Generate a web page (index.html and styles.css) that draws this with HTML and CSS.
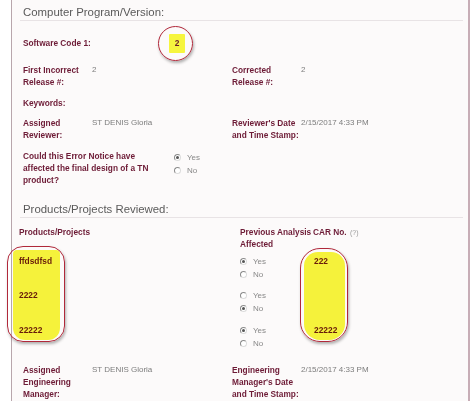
FILE: index.html
```html
<!DOCTYPE html>
<html>
<head>
<meta charset="utf-8">
<link rel="stylesheet" href="styles.css">
</head>
<body>
<div class="frame">
  <h2 class="sec-title">Computer Program/Version:</h2>
  <div class="fields">
    <div class="row row-code">
      <span class="label code-label">Software Code 1:</span>
      <span class="code-val">2</span>
    </div>
    <div class="row pair r2">
      <div class="field"><span class="label">First Incorrect Release #:</span><span class="value">2</span></div>
      <div class="field"><span class="label">Corrected Release #:</span><span class="value">2</span></div>
    </div>
    <div class="row r3">
      <div class="field"><span class="label">Keywords:</span><span class="value"></span></div>
    </div>
    <div class="row pair r4">
      <div class="field"><span class="label">Assigned Reviewer:</span><span class="value">ST DENIS Gloria</span></div>
      <div class="field"><span class="label">Reviewer's Date and Time Stamp:</span><span class="value">2/15/2017 4:33 PM</span></div>
    </div>
    <div class="row question r5">
      <span class="label q-label">Could this Error Notice have affected the final design of a TN product?</span>
      <div class="radios">
        <div class="radio"><span class="dot on"></span>Yes</div>
        <div class="radio"><span class="dot"></span>No</div>
      </div>
    </div>
  </div>

  <h2 class="sec-title sec2">Products/Projects Reviewed:</h2>
  <div class="table">
    <div class="thead">
      <span class="label">Products/Projects</span>
      <span class="label">Previous Analysis Affected</span>
      <span class="label">CAR No. <span class="help">(?)</span></span>
    </div>
    <div class="tbody">
      <div class="trow">
        <span class="prod">ffdsdfsd</span>
        <div class="radios"><div class="radio"><span class="dot on"></span>Yes</div><div class="radio"><span class="dot"></span>No</div></div>
        <span class="car">222</span>
      </div>
      <div class="trow">
        <span class="prod">2222</span>
        <div class="radios"><div class="radio"><span class="dot"></span>Yes</div><div class="radio"><span class="dot on"></span>No</div></div>
        <span class="car"></span>
      </div>
      <div class="trow">
        <span class="prod">22222</span>
        <div class="radios"><div class="radio"><span class="dot on"></span>Yes</div><div class="radio"><span class="dot"></span>No</div></div>
        <span class="car">22222</span>
      </div>
      <span class="hl hl-left"></span>
      <span class="ring ring-left"></span>
      <span class="hl hl-right"></span>
      <span class="ring ring-right"></span>
    </div>
  </div>

  <div class="fields">
    <div class="row pair r6">
      <div class="field"><span class="label">Assigned Engineering Manager:</span><span class="value">ST DENIS Gloria</span></div>
      <div class="field"><span class="label">Engineering Manager's Date and Time Stamp:</span><span class="value">2/15/2017 4:33 PM</span></div>
    </div>
  </div>
</div>
</body>
</html>
```

FILE: styles.css
```css
html, body {
  margin: 0;
  padding: 0;
  background: #ffffff;
  font-family: "Liberation Sans", Arial, Helvetica, sans-serif;
}

.frame {
  margin-left: 11px;
  width: 456px;
  min-height: 420px;
  background: #fcfafa;
  border-left: 1px solid #b8a6ac;
  border-right: 2px solid #c7adb6;
}

.sec-title {
  margin: 0 5px 0 8px;
  padding: 5px 0 1px 3px;
  font-size: 11.4px;
  line-height: 14px;
  font-weight: normal;
  color: #5a5a5a;
  border-bottom: 1px solid #e8e3e5;
}

.sec2 {
  margin-top: 11px;
}

.fields {
  padding-left: 11px;
}

.label {
  font-size: 8.3px;
  line-height: 12px;
  font-weight: bold;
  color: #6d1b36;
}

.value {
  font-size: 8px;
  line-height: 12px;
  color: #7c7c7c;
}

.row {
  display: flex;
}

.row-code {
  margin-top: 12px;
  height: 20px;
  align-items: center;
}

.code-label {
  width: 146px;
}

.code-val {
  position: relative;
  width: 16px;
  height: 19px;
  line-height: 19px;
  text-align: center;
  background: #f6f53e;
  border-radius: 1px;
  font-size: 8.4px;
  font-weight: bold;
  color: #6b1c2c;
}

.code-val::after {
  content: "";
  position: absolute;
  left: -11px;
  top: -8px;
  width: 33px;
  height: 33px;
  border: 1.6px solid #b0283a;
  border-radius: 50%;
  box-shadow: 1px 2px 3px rgba(0, 0, 0, 0.3);
}

.pair {
  display: grid;
  grid-template-columns: 209px 209px;
}

.field {
  display: grid;
  grid-template-columns: 69px 1fr;
  align-items: start;
}

.r2 { margin-top: 11px; }
.r3 { margin-top: 9px; }
.r4 { margin-top: 8px; }
.r5 { margin-top: 9px; }
.r6 { margin-top: 14.5px; }

.q-label {
  width: 140px;
  margin-right: 11px;
}

.radios {
  display: flex;
  flex-direction: column;
  margin-top: 0.5px;
}

.radio {
  display: flex;
  align-items: center;
  height: 13px;
  font-size: 8px;
  color: #888888;
}

.dot {
  position: relative;
  display: inline-block;
  box-sizing: border-box;
  width: 7px;
  height: 7px;
  margin-right: 6px;
  border-radius: 50%;
  border: 1px solid;
  border-color: #8a8a8a #dcdcdc #dcdcdc #8a8a8a;
  background: #ffffff;
}

.dot.on::after {
  content: "";
  position: absolute;
  left: 1px;
  top: 1px;
  width: 3px;
  height: 3px;
  border-radius: 50%;
  background: #555555;
}

.table {
  margin-left: 7px;
  margin-top: 8px;
}

.thead,
.trow {
  display: grid;
  grid-template-columns: 221px 73px 1fr;
  align-items: start;
}

.help {
  font-size: 7px;
  font-weight: normal;
  color: #9a9a9a;
  margin-left: 1px;
}

.tbody {
  position: relative;
  margin-top: 4.5px;
  display: flex;
  flex-direction: column;
  gap: 8.5px;
}

.prod,
.car {
  font-size: 8.4px;
  line-height: 13px;
  font-weight: bold;
  color: #6b1c24;
}

.car {
  padding-left: 1px;
}

.trow .radios {
  margin-top: 0;
}

.hl {
  position: absolute;
  background: #f8f73c;
  mix-blend-mode: multiply;
}

.hl-left {
  left: -6px;
  top: -4.5px;
  width: 47px;
  height: 90px;
  border-radius: 4px 4px 12px 12px;
}

.hl-right {
  left: 285px;
  top: -2.5px;
  width: 41px;
  height: 88px;
  border-radius: 14px 14px 16px 16px;
}

.ring {
  position: absolute;
  box-sizing: border-box;
  border: 1.6px solid #b0283a;
  box-shadow: 1px 2px 3px rgba(0, 0, 0, 0.3);
}

.ring-left {
  left: -12px;
  top: -8.5px;
  width: 58px;
  height: 96px;
  border-radius: 16px;
}

.ring-right {
  left: 281px;
  top: -6.5px;
  width: 48px;
  height: 94px;
  border-radius: 20px;
}
```
